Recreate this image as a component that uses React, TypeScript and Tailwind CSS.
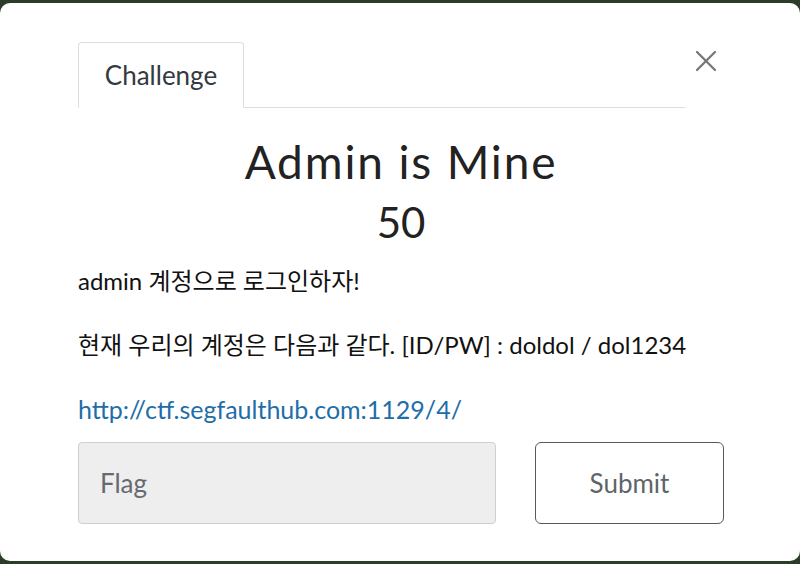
import { X } from "lucide-react";

export default function App() {
  return (
    <div className="h-[564px] w-[800px] overflow-hidden bg-[#2b3d28] pt-[3px] font-['Lato','Noto_Sans_CJK_KR',sans-serif]">
      <div className="h-[558px] w-[800px] rounded-[10px] bg-white px-[76px] pt-[39px]">
        {/* tab row */}
        <div className="flex items-start pl-[2px]">
          <div className="flex h-[66px] w-[607px] shrink-0 items-end border-b border-[#dddddd]">
            <div className="-mb-px flex h-[66px] w-[166px] items-center justify-center rounded-t-[4px] border border-b-white border-[#dddddd] bg-white text-[26px] text-[#333a40]">
              Challenge
            </div>
          </div>
          <button type="button" className="ml-[3px] mt-[1px] shrink-0 text-[#777777]" aria-label="Close">
            <X className="h-[36px] w-[36px]" strokeWidth={1.5} />
          </button>
        </div>

        <div className="pl-[2px]">
          <h1 className="mt-[27px] text-center text-[46px] leading-[54px] tracking-[0.04em] text-[#222222]">
            Admin is Mine
          </h1>
          <div className="mt-[9px] text-center text-[42px] leading-[48px] text-[#222222]">50</div>

          <p className="mt-[19px] text-[24px] leading-[32px] text-[#111111]">admin 계정으로 로그인하자!</p>
          <p className="mt-[32px] text-[24px] leading-[32px] text-[#111111]">
            현재 우리의 계정은 다음과 같다. [ID/PW] : doldol / dol1234
          </p>
          <a href="#" className="mt-[32px] block text-[25px] leading-[32px] text-[#1f6ea8]">
            http://ctf.segfaulthub.com:1129/4/
          </a>

          <div className="mt-[17px] flex gap-[39px]">
            <input
              placeholder="Flag"
              className="h-[82px] w-[418px] shrink-0 rounded-[4px] border border-[#cfcfcf] bg-[#eeeeee] px-[21px] text-[26px] text-[#555] placeholder:text-[#666a70] outline-none"
            />
            <button
              type="button"
              className="h-[82px] w-[189px] shrink-0 rounded-[6px] border-[1.5px] border-[#555a60] bg-white text-[26px] text-[#5f646a]"
            >
              Submit
            </button>
          </div>
        </div>
      </div>
    </div>
  );
}
